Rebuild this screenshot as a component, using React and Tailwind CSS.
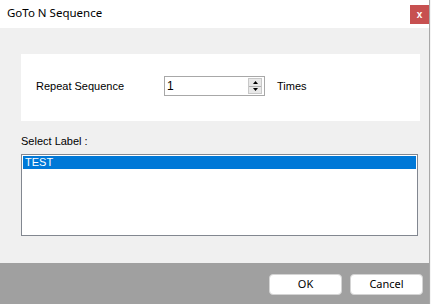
import React from "react";

export default function App() {
  return (
    <div className="w-[431px] h-[304px] flex bg-white overflow-hidden">
      <div className="w-[429px] h-[304px] flex flex-col">
        {/* Title bar */}
        <div className="h-[28px] bg-white flex items-start justify-between pl-[7px]">
          <div className="mt-[5px] text-[11.5px] leading-[16px] text-black font-['Segoe_UI','Noto_Sans',sans-serif]">GoTo N Sequence</div>
          <div className="mt-[5px] w-[19px] h-[19px] bg-[#c75050] flex items-center justify-center text-white text-[10px] font-bold leading-none font-['Liberation_Sans',sans-serif]">x</div>
        </div>
        {/* Body */}
        <div className="h-[235px] bg-[#f0f0f0] pl-[21px] pt-[26px] font-['Liberation_Sans',sans-serif] text-[11px] text-black">
          <div className="w-[399px] h-[67px] bg-white flex items-start pt-[22px] pl-[15px]">
            <div className="w-[128px] h-[20px] flex items-center">Repeat Sequence</div>
            <div className="w-[101px] h-[20px] border border-[#a8a8a8] bg-white flex items-center justify-between pl-[2px] pr-[2px]">
              <span className="leading-none text-[12px]">1</span>
              <div className="w-[14px] h-[16px] flex flex-col border border-[#c8c8c8]">
                <div className="flex-1 bg-[#e8e8e8] flex items-center justify-center border-b border-[#b0b0b0]">
                  <svg width="5" height="3" viewBox="0 0 5 3"><path d="M2.5 0 L5 3 L0 3 Z" fill="#000" /></svg>
                </div>
                <div className="flex-1 bg-[#e8e8e8] flex items-center justify-center">
                  <svg width="5" height="3" viewBox="0 0 5 3"><path d="M0 0 L5 0 L2.5 3 Z" fill="#000" /></svg>
                </div>
              </div>
            </div>
            <div className="ml-[12px] h-[20px] flex items-center">Times</div>
          </div>
          <div className="mt-[14px] leading-[13px] h-[13px]">Select Label :</div>
          <div className="mt-[6px] w-[397px] h-[82px] border border-[#828790] bg-white p-[1px]">
            <div className="h-[13px] bg-[#0078d7] text-white leading-[13px] pl-[2px]">TEST</div>
          </div>
        </div>
        {/* Footer */}
        <div className="flex-1 bg-[#a0a0a0] flex justify-end items-start pt-[11px] pr-[6px] gap-[8px] font-['Segoe_UI','Noto_Sans',sans-serif] text-[11px] text-black">
          <div className="w-[73px] h-[21px] bg-white border border-[#d4d4d4] rounded-[4px] flex items-center justify-center">OK</div>
          <div className="w-[73px] h-[21px] bg-white border border-[#d4d4d4] rounded-[4px] flex items-center justify-center">Cancel</div>
        </div>
      </div>
      <div className="w-px h-[304px] bg-[#a8a8a8]" />
      <div className="w-px h-[304px] bg-[#f4f4f4]" />
    </div>
  );
}
